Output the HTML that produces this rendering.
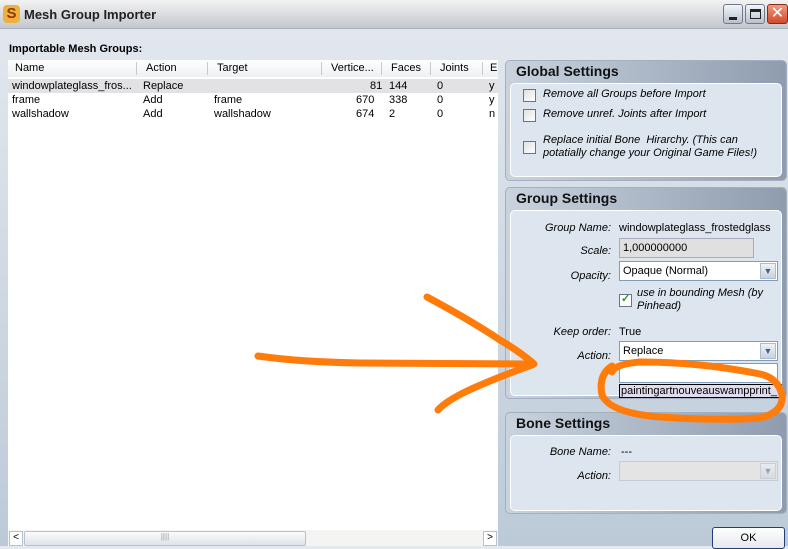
<!DOCTYPE html>
<html><head><style>
*{box-sizing:border-box}
body{margin:0;width:788px;height:546px;overflow:hidden;background:linear-gradient(#e4e9ef,#bccad8);font-family:"Liberation Sans",sans-serif;font-size:11px;position:relative;color:#000}
.abs{position:absolute}
.title{left:0;top:0;width:788px;height:29px;background:linear-gradient(#f3f3f3,#d6d8dc 60%,#c4c8ce);border-bottom:1px solid #a9b0ba}
.tb{top:4px;width:20px;height:20px;border:1px solid #6d7b8c;border-radius:3px;background:linear-gradient(#f3f5f8,#b7c1cf)}
.list{left:8px;top:60px;width:490px;height:486px;background:#fff}
.hdr{position:absolute;left:0;top:0;width:490px;height:17px;background:linear-gradient(#fff,#eef0f2)}
.hdr span{position:absolute;top:2px}
.sep{position:absolute;top:2px;width:1px;height:13px;background:#c8c8c8}
.row{position:absolute;left:0;width:490px;height:14px}
.row span{position:absolute;top:1px}
.panel{position:absolute;left:505px;width:282px;border:1px solid #a4b0bf;border-radius:5px;background:linear-gradient(90deg,#c9d3de,#8f9caf)}
.panel h3{margin:0;font-size:14px;font-weight:bold;padding:2px 0 0 10px;height:22px;color:#111}
.inner{position:absolute;left:4px;right:4px;background:#dde5ee;border:1px solid #fff;border-radius:5px}
.cb{position:absolute;width:13px;height:13px;border:1px solid #6a7482;background:linear-gradient(135deg,#e0e0e0,#fff)}
.it{font-style:italic;position:absolute}
.lbl{position:absolute;font-style:italic;text-align:right;width:100px}
.inp{position:absolute;height:20px;border:1px solid #7f9db9;background:#fff;padding:3px 3px}
.dd{position:absolute;right:1px;top:1px;width:16px;height:16px;border:1px solid #b0bccb;background:linear-gradient(#eef2f7,#c8d3e1);font-size:9px;text-align:center;line-height:14px;color:#4d6185}
</style></head><body>
<div class="abs title">
 <div class="abs" style="left:3px;top:5px;width:17px;height:18px;border-radius:4px;background:#f0b040;color:#8a3b00;font-weight:bold;font-size:15px;text-align:center;line-height:18px">S</div>
 <div class="abs" style="left:24px;top:7px;font-size:13px;font-weight:bold;color:#222">Mesh Group Importer</div>
 <div class="abs tb" style="left:723px"><div class="abs" style="left:5px;top:12px;width:8px;height:3px;background:#222"></div></div>
 <div class="abs tb" style="left:745px"><div class="abs" style="left:4px;top:4px;width:11px;height:10px;border:1px solid #222;border-top-width:3px"></div></div>
 <div class="abs tb" style="left:767px;width:21px;background:linear-gradient(#f09a80,#d24a2a);border-color:#8b2a1a;color:#fff;font-size:16px;text-align:center;line-height:18px">✕</div>
</div>
<div class="abs" style="left:9px;top:43px;font-weight:bold">Importable Mesh Groups:</div>
<div class="abs list">
 <div class="hdr">
  <span style="left:7px">Name</span><div class="sep" style="left:128px"></div>
  <span style="left:138px">Action</span><div class="sep" style="left:199px"></div>
  <span style="left:209px">Target</span><div class="sep" style="left:313px"></div>
  <span style="left:323px">Vertice...</span><div class="sep" style="left:373px"></div>
  <span style="left:383px">Faces</span><div class="sep" style="left:422px"></div>
  <span style="left:432px">Joints</span><div class="sep" style="left:474px"></div>
  <span style="left:482px">E</span>
 </div>
 <div class="row" style="top:19px;background:#e2e2e5"><span style="left:4px">windowplateglass_fros...</span><span style="left:135px">Replace</span><span style="left:362px">81</span><span style="left:381px">144</span><span style="left:429px">0</span><span style="left:481px">y</span></div>
 <div class="row" style="top:33px"><span style="left:4px">frame</span><span style="left:135px">Add</span><span style="left:206px">frame</span><span style="left:348px">670</span><span style="left:381px">338</span><span style="left:429px">0</span><span style="left:481px">y</span></div>
 <div class="row" style="top:47px"><span style="left:4px">wallshadow</span><span style="left:135px">Add</span><span style="left:206px">wallshadow</span><span style="left:348px">674</span><span style="left:381px">2</span><span style="left:429px">0</span><span style="left:481px">n</span></div>
 <div class="abs" style="left:0;top:470px;width:490px;height:16px;background:#f4f4f2">
  <div class="abs" style="left:1px;top:1px;width:14px;height:15px;border:1px solid #b8c2cf;background:#fff;font-size:10px;text-align:center">&lt;</div>
  <div class="abs" style="left:16px;top:1px;width:282px;height:15px;border:1px solid #b8c2cf;border-radius:2px;background:linear-gradient(#fafbfc,#dde3ea);text-align:center;font-size:8px;color:#999">||||</div>
  <div class="abs" style="left:475px;top:1px;width:14px;height:15px;border:1px solid #b8c2cf;background:#fff;font-size:10px;text-align:center">&gt;</div>
 </div>
</div>

<div class="panel" style="top:60px;height:121px"><h3>Global Settings</h3>
 <div class="inner" style="top:22px;height:94px">
  <div class="cb" style="left:12px;top:5px"></div><div class="it" style="left:32px;top:4px">Remove all Groups before Import</div>
  <div class="cb" style="left:12px;top:25px"></div><div class="it" style="left:32px;top:24px">Remove unref. Joints after Import</div>
  <div class="cb" style="left:12px;top:57px"></div><div class="it" style="left:32px;top:50px;line-height:13px">Replace initial Bone &nbsp;Hirarchy. (This can<br>potatially change your Original Game Files!)</div>
 </div>
</div>

<div class="panel" style="top:187px;height:212px"><h3>Group Settings</h3>
 <div class="inner" style="top:22px;height:186px">
  <div class="lbl" style="left:0;top:11px">Group Name:</div><div class="abs" style="left:108px;top:11px">windowplateglass_frostedglass</div>
  <div class="lbl" style="left:0;top:34px">Scale:</div><div class="inp" style="left:108px;top:27px;width:135px;background:#e0e0e0;border-color:#aab">1,000000000</div>
  <div class="lbl" style="left:0;top:59px">Opacity:</div><div class="inp" style="left:108px;top:50px;width:159px">Opaque (Normal)<div class="dd">▼</div></div>
  <div class="cb" style="left:108px;top:83px;background:#fff"><span style="position:absolute;left:1px;top:-3px;color:#2a9a2a;font-size:11px;font-weight:bold">✓</span></div>
  <div class="it" style="left:126px;top:76px;line-height:13px">use in bounding Mesh (by<br>Pinhead)</div>
  <div class="lbl" style="left:0;top:115px">Keep order:</div><div class="abs" style="left:108px;top:115px">True</div>
  <div class="lbl" style="left:0;top:139px">Action:</div><div class="inp" style="left:108px;top:130px;width:159px">Replace<div class="dd">▼</div></div>
  <div class="inp" style="left:108px;top:152px;width:159px"></div>
  <div class="abs" style="left:108px;top:173px;width:163px;height:14px;border:1px solid #000;background:#dde;padding-left:1px">paintingartnouveauswampprint_</div>
 </div>
</div>

<div class="panel" style="top:412px;height:102px"><h3>Bone Settings</h3>
 <div class="inner" style="top:22px;height:76px">
  <div class="lbl" style="left:0;top:10px">Bone Name:</div><div class="abs" style="left:110px;top:10px">---</div>
  <div class="lbl" style="left:0;top:34px">Action:</div><div class="inp" style="left:108px;top:25px;width:159px;background:#e4e4e4;border-color:#c8ccd2"><div class="dd" style="opacity:.5">▼</div></div>
 </div>
</div>
<div class="abs" style="left:712px;top:527px;width:73px;height:22px;border:1px solid #1f3f7a;border-radius:3px;background:linear-gradient(#fff,#e6e8ee);text-align:center;line-height:20px">OK</div>

<svg class="abs" style="left:0;top:0" width="788" height="546">
 <g fill="none" stroke="#ff7b0a" stroke-width="7" stroke-linecap="round" stroke-linejoin="round">
  <path d="M258 356 Q300 362 360 363 L534 364"/>
  <path d="M427 297 Q470 320 500 340 Q520 352 533 363"/>
  <path d="M532 365 Q490 380 465 392 Q445 402 438 410"/>
  <path d="M612 366 Q598 375 602 395 Q610 413 660 417 Q720 421 760 418 Q784 412 782 395 Q778 378 760 374 Q700 362 640 362 Q615 364 612 372"/>
 </g>
</svg>
</body></html>
